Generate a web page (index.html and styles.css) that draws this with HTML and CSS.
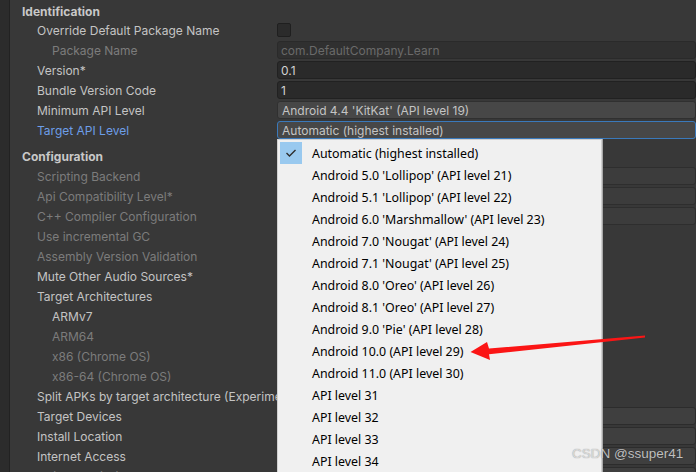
FILE: index.html
```html
<!DOCTYPE html>
<html>
<head>
<meta charset="utf-8">
<link rel="stylesheet" href="styles.css">
</head>
<body>
<div class="app">
  <div class="gutter"></div>
  <div class="panel">
    <div class="header first">Identification</div>
    <div class="row"><div class="label l1">Override Default Package Name</div><div class="field"><span class="checkbox"></span></div></div>
    <div class="row"><div class="label l2 dis">Package Name</div><div class="field"><div class="text disabled">com.DefaultCompany.Learn</div></div></div>
    <div class="row"><div class="label l1">Version*</div><div class="field"><div class="text">0.1</div></div></div>
    <div class="row"><div class="label l1">Bundle Version Code</div><div class="field"><div class="text">1</div></div></div>
    <div class="row"><div class="label l1">Minimum API Level</div><div class="field"><div class="drop">Android 4.4 'KitKat' (API level 19)</div></div></div>
    <div class="row"><div class="label l1 focus">Target API Level</div><div class="field"><div class="drop active">Automatic (highest installed)</div></div></div>

    <div class="header second">Configuration</div>
    <div class="row"><div class="label l1 dis">Scripting Backend</div><div class="field"><div class="drop off"></div></div></div>
    <div class="row"><div class="label l1 dis">Api Compatibility Level*</div><div class="field"><div class="drop off"></div></div></div>
    <div class="row"><div class="label l1 dis">C++ Compiler Configuration</div><div class="field"><div class="drop off"></div></div></div>
    <div class="row"><div class="label l1 dis">Use incremental GC</div><div class="field"></div></div>
    <div class="row"><div class="label l1 dis">Assembly Version Validation</div><div class="field"></div></div>
    <div class="row"><div class="label l1">Mute Other Audio Sources*</div><div class="field"></div></div>
    <div class="row"><div class="label l1">Target Architectures</div><div class="field"></div></div>
    <div class="row"><div class="label l2">ARMv7</div><div class="field"></div></div>
    <div class="row"><div class="label l2 dis">ARM64</div><div class="field"></div></div>
    <div class="row"><div class="label l2 dis">x86 (Chrome OS)</div><div class="field"></div></div>
    <div class="row"><div class="label l2 dis">x86-64 (Chrome OS)</div><div class="field"></div></div>
    <div class="row"><div class="label l1">Split APKs by target architecture (Experimental)</div><div class="field"></div></div>
    <div class="row"><div class="label l1">Target Devices</div><div class="field"><div class="drop plain"></div></div></div>
    <div class="row"><div class="label l1">Install Location</div><div class="field"><div class="drop plain"></div></div></div>
    <div class="row"><div class="label l1">Internet Access</div><div class="field"><div class="drop plain"></div></div></div>
    <div class="row"><div class="label l1">Write Permission</div><div class="field"><div class="drop plain"></div></div></div>
  </div>

  <div class="popup">
    <div class="item"><span class="check"><svg width="22" height="22" viewBox="0 0 22 22"><polyline points="6.5,11 9.5,14 15.5,8" fill="none" stroke="#2e2e2e" stroke-width="1.4"/></svg></span><span class="itext">Automatic (highest installed)</span></div>
    <div class="item"><span class="check"></span><span class="itext">Android 5.0 'Lollipop' (API level 21)</span></div>
    <div class="item"><span class="check"></span><span class="itext">Android 5.1 'Lollipop' (API level 22)</span></div>
    <div class="item"><span class="check"></span><span class="itext">Android 6.0 'Marshmallow' (API level 23)</span></div>
    <div class="item"><span class="check"></span><span class="itext">Android 7.0 'Nougat' (API level 24)</span></div>
    <div class="item"><span class="check"></span><span class="itext">Android 7.1 'Nougat' (API level 25)</span></div>
    <div class="item"><span class="check"></span><span class="itext">Android 8.0 'Oreo' (API level 26)</span></div>
    <div class="item"><span class="check"></span><span class="itext">Android 8.1 'Oreo' (API level 27)</span></div>
    <div class="item"><span class="check"></span><span class="itext">Android 9.0 'Pie' (API level 28)</span></div>
    <div class="item"><span class="check"></span><span class="itext">Android 10.0 (API level 29)</span></div>
    <div class="item"><span class="check"></span><span class="itext">Android 11.0 (API level 30)</span></div>
    <div class="item"><span class="check"></span><span class="itext">API level 31</span></div>
    <div class="item"><span class="check"></span><span class="itext">API level 32</span></div>
    <div class="item"><span class="check"></span><span class="itext">API level 33</span></div>
    <div class="item"><span class="check"></span><span class="itext">API level 34</span></div>
  </div>

  <svg class="arrow" width="696" height="472" viewBox="0 0 696 472">
    <polygon points="645,335.6 645,337.6 489,354.2 490,360 470.5,352 487,342 489,348.6" fill="#fb1515"/>
  </svg>

  <div class="watermark">CSDN @ssuper41</div>
</div>
</body>
</html>
```

FILE: styles.css
```css
html, body {
  margin: 0;
  padding: 0;
  background: #383838;
  overflow: hidden;
}

.app {
  position: relative;
  width: 696px;
  height: 472px;
  display: flex;
  overflow: hidden;
  font-family: Inter, "Noto Sans", sans-serif;
  font-size: 12px;
}

.gutter {
  width: 9px;
  flex: none;
  background: #2c2c2c;
  border-right: 1px solid #222222;
}

.panel {
  flex: 1;
  display: flex;
  flex-direction: column;
  background: #383838;
}

.header {
  height: 20px;
  line-height: 23px;
  padding-left: 12px;
  font-weight: 700;
  color: #c8c8c8;
  flex: none;
}

.header.second {
  margin-top: 6px;
  line-height: 22px;
}

.row {
  height: 20px;
  flex: none;
  display: grid;
  grid-template-columns: 267px 1fr;
  align-items: center;
}

.label {
  white-space: nowrap;
  overflow: hidden;
  color: #c4c4c4;
  padding-right: 2px;
  height: 20px;
  line-height: 22px;
}

.label.l1 { padding-left: 27px; }
.label.l2 { padding-left: 42px; }
.label.dis { color: #7c7c7c; }
.label.focus { color: #6d9ee8; }

.field {
  height: 20px;
  display: flex;
  align-items: center;
}

.checkbox {
  width: 12px;
  height: 12px;
  background: #2b2b2b;
  border: 1px solid #1f1f1f;
  border-radius: 2px;
}

.text {
  box-sizing: border-box;
  width: 100%;
  height: 18px;
  background: #2a2a2a;
  border: 1px solid #212121;
  border-radius: 3px;
  padding-left: 3px;
  color: #d2d2d2;
  line-height: 18px;
  white-space: nowrap;
}

.text.disabled {
  background: #303030;
  border-color: #2a2a2a;
  color: #6a6a6a;
}

.drop {
  box-sizing: border-box;
  width: 100%;
  height: 18px;
  background: #474747;
  border: 1px solid #303030;
  border-radius: 3px;
  padding-left: 4px;
  color: #c4c4c4;
  line-height: 17px;
  white-space: nowrap;
}

.drop.active {
  border-color: #3a79bb;
}

.drop.off {
  background: #3c3c3c;
  border-color: #2e2e2e;
}

.drop.plain {
  background: #3f3f3f;
  border-color: #2c2c2c;
}

.popup {
  position: absolute;
  left: 277px;
  top: 139px;
  width: 323px;
  height: 340px;
  background: #f0f0f0;
  border: 1px solid #d0d0d0;
  box-shadow: 1px 0 0 #a8a8a8;
  padding-top: 2px;
  font-family: "Noto Sans", "Noto Sans CJK SC", sans-serif;
  font-size: 12.4px;
}

.item {
  height: 22px;
  display: flex;
  align-items: center;
  color: #000;
}

.check {
  width: 22px;
  height: 22px;
  margin-left: 2px;
  margin-right: 10px;
  flex: none;
}

.item:first-child .check {
  background: #99c9ef;
}

.check svg {
  display: block;
}

.itext {
  white-space: nowrap;
}

.arrow {
  position: absolute;
  left: 0;
  top: 0;
  pointer-events: none;
}

.watermark {
  position: absolute;
  left: 572px;
  top: 446px;
  font-family: "Liberation Sans", Arial, sans-serif;
  font-size: 13.5px;
  color: rgba(235, 235, 235, 0.78);
  text-shadow: 0 0 1px rgba(0, 0, 0, 0.45);
  white-space: nowrap;
}
```
